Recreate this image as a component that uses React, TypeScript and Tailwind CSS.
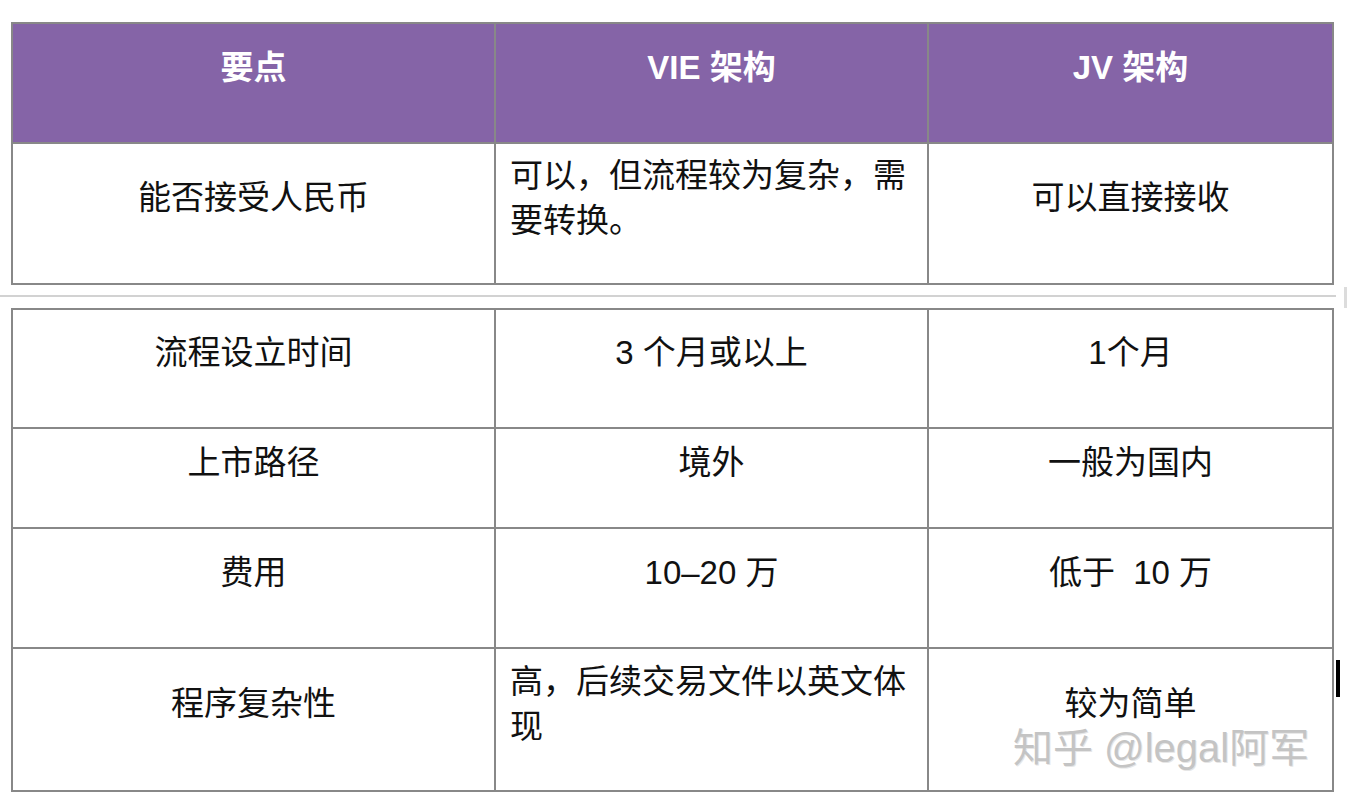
const FONT = { fontFamily: '"Liberation Sans", "Noto Sans CJK SC", sans-serif' };

type Row = { h: string; cells: [string, string, string]; left?: boolean };

const top: Row[] = [
  { h: 'h-[141px] border-t-2', cells: ['能否接受人民币', '可以，但流程较为复杂，需要转换。', '可以直接接收'], left: true },
];

const bottom: Row[] = [
  { h: 'h-[117px]', cells: ['流程设立时间', '3 个月或以上', '1个月'] },
  { h: 'h-[100px] border-t-2', cells: ['上市路径', '境外', '一般为国内'] },
  { h: 'h-[120px] border-t-2', cells: ['费用', '10–20 万', '低于  10 万'] },
  { h: 'h-[143px] border-t-2', cells: ['程序复杂性', '高，后续交易文件以英文体现', '较为简单'], left: true },
];

function Cell({ text, left, first }: { text: string; left?: boolean; first?: boolean }) {
  return (
    <div
      className={`flex min-h-0 items-center pt-[12px] pb-[44px] border-[#888888] ${first ? '' : 'border-l-2'} ${
        left ? 'justify-start text-left pl-[14px] pr-[14px]' : 'justify-center text-center px-2'
      }`}
    >
      <span className="whitespace-pre-wrap">{text}</span>
    </div>
  );
}

function BodyRow({ row }: { row: Row }) {
  return (
    <div className={`grid grid-cols-[481px_433px_405px] auto-rows-fr border-[#888888] ${row.h}`}>
      <Cell text={row.cells[0]} first />
      <Cell text={row.cells[1]} left={row.left} />
      <Cell text={row.cells[2]} />
    </div>
  );
}

export default function App() {
  return (
    <div className="relative w-[1348px] h-[810px] overflow-hidden bg-white pt-[22px] text-[33px] leading-[45px] text-[#111111]" style={FONT}>
      <div className="ml-[11px] w-[1323px] border-2 border-[#888888]">
        <div className="grid grid-cols-[481px_433px_405px] auto-rows-fr h-[118px] bg-[#8564a7] font-bold text-white">
          {['要点', 'VIE 架构', 'JV 架构'].map((t, i) => (
            <div
              key={t}
              className={`flex items-center justify-center pt-[12px] pb-[44px] ${i ? 'border-l-2 border-[#888888]' : ''}`}
            >
              {t}
            </div>
          ))}
        </div>
        {top.map((r) => (
          <BodyRow key={r.cells[0]} row={r} />
        ))}
      </div>

      <div className="mt-[10px] h-[2px] w-[1336px] bg-[#d2d2d2]" />

      <div className="mt-[11px] ml-[11px] w-[1323px] border-2 border-[#888888]">
        {bottom.map((r) => (
          <BodyRow key={r.cells[0]} row={r} />
        ))}
      </div>

      {/* page artifacts */}
      <div className="absolute left-[1344px] top-[287px] h-[21px] w-[3px] bg-[#dcdcdc]" />
      <div className="absolute left-[1336px] top-[660px] h-[37px] w-[4px] bg-black" />

      {/* watermark */}
      <div
        className="absolute left-[1013px] top-[724px] text-[40px] leading-[48px] text-[#c4c4c4] whitespace-nowrap"
        style={{ textShadow: '1px 1px 0 #e6e6e6, -1px -1px 0 #ffffff' }}
      >
        知乎 @legal阿军
      </div>
    </div>
  );
}
